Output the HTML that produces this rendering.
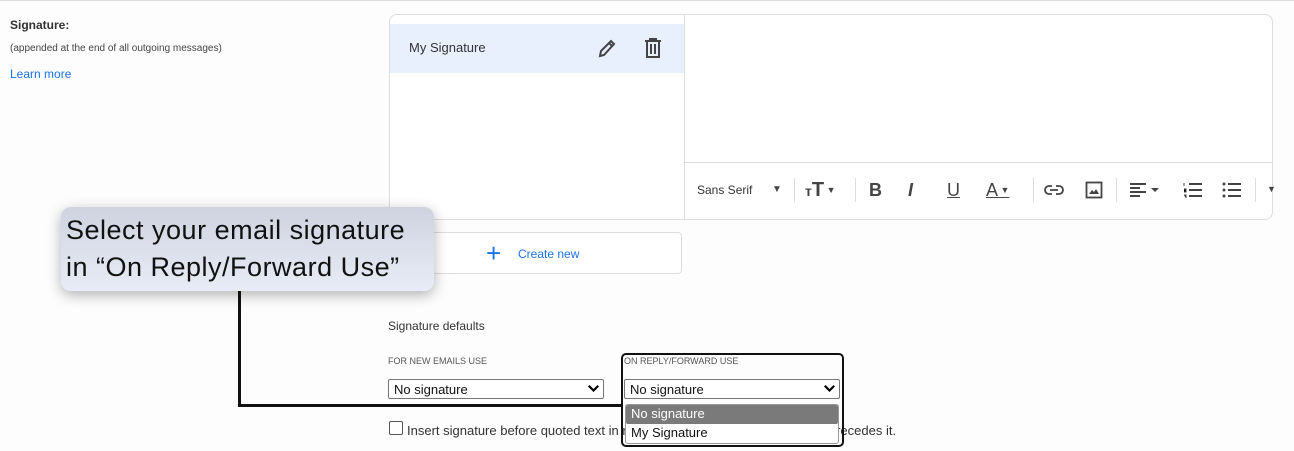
<!DOCTYPE html>
<html><head><style>
body{margin:0;width:1294px;height:451px;background:#fdfdfd;font-family:"Liberation Sans",sans-serif;position:relative;overflow:hidden;color:#222}
.a{position:absolute}
.sel{position:absolute;height:20px;border:1px solid #767676;border-radius:2px;background:#fff;font-size:13px;line-height:19px;padding-left:5px;box-sizing:border-box;color:#111}
.sel svg{position:absolute;right:4px;top:5px}
.tb{position:absolute;top:180px;font-size:18px;color:#444;font-weight:bold}
</style></head><body>
<div class="a" style="left:0;top:0;width:1294px;height:1px;background:#ddd"></div>
<div class="a" style="left:10px;top:18px;font-size:12px;font-weight:bold;color:#333">Signature:</div>
<div class="a" style="left:10px;top:43px;font-size:10px;color:#444">(appended at the end of all outgoing messages)</div>
<div class="a" style="left:10px;top:67px;font-size:12px;color:#1a73e8">Learn more</div>

<div class="a" style="left:389px;top:14px;width:884px;height:206px;border:1px solid #ddd;border-radius:8px;background:#fff;box-sizing:border-box"></div>
<div class="a" style="left:390px;top:24px;width:294px;height:49px;background:#e8f0fe"></div>
<div class="a" style="left:684px;top:15px;width:1px;height:205px;background:#ddd"></div>
<div class="a" style="left:685px;top:162px;width:588px;height:1px;background:#ddd"></div>
<div class="a" style="left:409px;top:40px;font-size:13px;color:#333">My Signature</div>
<svg class="a" style="left:596px;top:37px" width="22" height="22" viewBox="0 0 22 22"><path d="M4 19l1-5L15 4l3 3L8 18z M13 6l3 3" fill="none" stroke="#444" stroke-width="2"/></svg>
<svg class="a" style="left:643px;top:37px" width="20" height="22" viewBox="0 0 20 22"><path d="M2 4h16M7 4V2h6v2M4 4v16h12V4M8 7v10M12 7v10" fill="none" stroke="#444" stroke-width="2"/></svg>

<div class="a" style="left:697px;top:183px;font-size:12px;color:#333">Sans Serif</div>
<div class="a" style="left:772px;top:184px;font-size:10px;color:#444">▼</div>
<div class="a" style="left:794px;top:178px;width:1px;height:24px;background:#ddd"></div>
<div class="tb" style="left:805px;top:179px;font-size:20px"><span style="font-size:14px">т</span>T<span style="font-size:9px;vertical-align:3px"> ▼</span></div>
<div class="a" style="left:855px;top:178px;width:1px;height:24px;background:#ddd"></div>
<div class="tb" style="left:869px">B</div>
<div class="tb" style="left:908px;font-style:italic">I</div>
<div class="tb" style="left:947px;text-decoration:underline;font-weight:normal">U</div>
<div class="tb" style="left:986px;text-decoration:underline;font-weight:normal">A<span style="font-size:9px;vertical-align:3px;text-decoration:none"> ▼</span></div>
<div class="a" style="left:1033px;top:178px;width:1px;height:24px;background:#ddd"></div>
<svg class="a" style="left:1044px;top:183px" width="20" height="14"><path d="M8 3H5a4 4 0 000 8h3M12 3h3a4 4 0 010 8h-3M6 7h8" fill="none" stroke="#444" stroke-width="1.8"/></svg>
<svg class="a" style="left:1085px;top:181px" width="18" height="18"><rect x="1.5" y="1.5" width="15" height="15" fill="none" stroke="#444" stroke-width="1.8"/><path d="M4 13l3-4 2 2 2-3 3 5z" fill="#444"/></svg>
<div class="a" style="left:1116px;top:178px;width:1px;height:24px;background:#ddd"></div>
<svg class="a" style="left:1130px;top:182px" width="36" height="16"><path d="M0 2h16M0 6h10M0 10h16M0 14h10" stroke="#444" stroke-width="2"/><path d="M21 6h8l-4 4z" fill="#444"/></svg>
<svg class="a" style="left:1183px;top:182px" width="20" height="16"><path d="M6 2h13M6 8h13M6 14h13" stroke="#444" stroke-width="2"/><path d="M1 1v3M1 7h2v3H1M1 13h2v3" stroke="#444" stroke-width="1"/></svg>
<svg class="a" style="left:1222px;top:182px" width="20" height="16"><path d="M6 2h13M6 8h13M6 14h13" stroke="#444" stroke-width="2"/><circle cx="2" cy="2" r="1.5" fill="#444"/><circle cx="2" cy="8" r="1.5" fill="#444"/><circle cx="2" cy="14" r="1.5" fill="#444"/></svg>
<div class="a" style="left:1255px;top:178px;width:1px;height:24px;background:#ddd"></div>
<div class="a" style="left:1267px;top:184px;font-size:9px;color:#444">▼</div>

<div class="a" style="left:420px;top:232px;width:262px;height:42px;border:1px solid #ddd;border-radius:4px;background:#fff;box-sizing:border-box"></div>
<div class="a" style="left:486px;top:239px;font-size:26px;color:#1a73e8;line-height:28px">+</div>
<div class="a" style="left:518px;top:247px;font-size:12px;color:#1a73e8">Create new</div>

<div class="a" style="left:61px;top:207px;width:373px;height:84px;border-radius:10px;background:linear-gradient(#cfd3df,#e8ecf7);box-shadow:0 4px 14px rgba(0,0,0,.3)"></div>
<div class="a" style="left:66px;top:212px;font-size:27px;letter-spacing:0.5px;line-height:37px;color:#111;white-space:nowrap">Select your email signature<br>in “On Reply/Forward Use”</div>

<div class="a" style="left:388px;top:319px;font-size:12px;color:#333">Signature defaults</div>
<div class="a" style="left:388px;top:356px;font-size:9px;color:#555">FOR NEW EMAILS USE</div>
<div class="sel" style="left:388px;top:379px;width:216px">No signature<svg width="11" height="8"><path d="M0 1.5l1.5-1.5 4 4 4-4 1.5 1.5-5.5 5.5z" fill="#000"/></svg></div>
<div class="a" style="left:624px;top:356px;font-size:9px;color:#555">ON REPLY/FORWARD USE</div>
<div class="sel" style="left:624px;top:379px;width:216px">No signature<svg width="11" height="8"><path d="M0 1.5l1.5-1.5 4 4 4-4 1.5 1.5-5.5 5.5z" fill="#000"/></svg></div>
<div class="a" style="left:389px;top:421px;width:14px;height:14px;border:1px solid #555;border-radius:2px;box-sizing:border-box;background:#fff"></div>
<div class="a" style="left:407px;top:423px;font-size:13px;color:#333;white-space:nowrap">Insert signature before quoted text in replies and remove the "--" line that precedes it.</div>
<div class="a" style="left:625px;top:404px;width:214px;height:40px;background:#fff;border:1px solid #999;border-radius:3px;box-sizing:border-box"></div>
<div class="a" style="left:626px;top:405px;width:212px;height:19px;background:#7a7a7a;border-radius:2px"></div>
<div class="a" style="left:631px;top:406px;font-size:13px;color:#fff">No signature</div>
<div class="a" style="left:631px;top:425px;font-size:13px;color:#111">My Signature</div>
<div class="a" style="left:621px;top:353px;width:223px;height:94px;border:2px solid #111;border-radius:5px;box-sizing:border-box"></div>

<div class="a" style="left:238px;top:291px;width:3px;height:116px;background:#111"></div>
<div class="a" style="left:238px;top:404px;width:384px;height:3px;background:#111"></div>
</body></html>
